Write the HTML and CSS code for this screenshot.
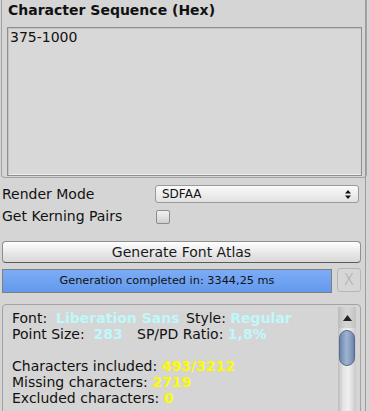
FILE: index.html
```html
<!DOCTYPE html>
<html>
<head>
<meta charset="utf-8">
<link rel="stylesheet" href="styles.css">
</head>
<body>
<div class="page">
  <div class="main">
    <div class="group">
      <div class="title">Character Sequence (Hex)</div>
      <div class="textarea">375-1000</div>
    </div>

    <div class="field">
      <div class="label">Render Mode</div>
      <div class="dropdown">
        <span>SDFAA</span>
        <svg class="updown" width="6" height="9" viewBox="0 0 6 9"><path d="M3 0 L6 3.5 L0 3.5 Z M0 5.5 L6 5.5 L3 9 Z" fill="#111"/></svg>
      </div>
    </div>

    <div class="field field-check">
      <div class="label">Get Kerning Pairs</div>
      <div class="checkbox"></div>
    </div>

    <div class="button">Generate Font Atlas</div>

    <div class="progress-row">
      <div class="progress">Generation completed in: 3344,25 ms</div>
      <div class="xbtn">X</div>
    </div>

    <div class="info">
      <div class="info-text">
        <div class="line"><span class="c1">Font:&nbsp; <b class="cy">Liberation Sans</b></span>Style: <b class="cy">Regular</b></div>
        <div class="line"><span class="c2">Point Size:&nbsp; <b class="cy">283</b></span>SP/PD Ratio: <b class="cy">1,8%</b></div>
        <div class="line"></div>
        <div class="line">Characters included: <b class="ye">493/3212</b></div>
        <div class="line">Missing characters: <b class="ye">2719</b></div>
        <div class="line">Excluded characters: <b class="ye">0</b></div>
      </div>
      <div class="scrollbar">
        <div class="sb-up"><svg width="9" height="6" viewBox="0 0 9 6"><path d="M4.5 0 L9 6 L0 6 Z" fill="#222"/></svg></div>
        <div class="sb-thumb"></div>
      </div>
    </div>
  </div>
  <div class="rail"></div>
</div>
</body>
</html>
```

FILE: styles.css
```css
html, body {
  margin: 0;
  padding: 0;
  background: #d5d5d5;
  overflow: hidden;
}

body {
  font-family: "DejaVu Sans", Verdana, sans-serif;
  font-size: 14px;
  color: #111;
}

.page {
  display: flex;
  height: 411px;
}

.main {
  width: 361px;
  flex: none;
}

.rail {
  width: 4px;
  border-right: 1px solid #9c9c9c;
  flex: none;
}

.group {
  margin-left: 1px;
  width: 355px;
  border: 1px solid #a2a2a2;
  border-top: 0;
  border-radius: 0 0 4px 4px;
  padding: 0 4px 1px 5px;
}

.title {
  font-weight: bold;
  line-height: 20px;
  height: 20px;
  padding-left: 1px;
}

.textarea {
  margin-top: 7px;
  border: 1px solid #8e8e8e;
  background: #d8d8d8;
  box-shadow: inset 1px 1px 0 #c4c4c4, inset 0 -1px 0 #eeeeee;
  padding: 1px 2px;
  line-height: 17px;
  box-sizing: border-box;
  height: 149px;
}

.field {
  display: flex;
  align-items: center;
  height: 18px;
  margin-top: 7px;
}

.field-check {
  height: 20px;
  margin-top: 3px;
}

.label {
  width: 155px;
  padding-left: 2px;
  flex: none;
  box-sizing: border-box;
}

.dropdown {
  width: 204px;
  height: 18px;
  box-sizing: border-box;
  border: 1px solid #9a9a9a;
  border-radius: 3px;
  background: linear-gradient(#fbfbfb, #e1e1e1);
  display: flex;
  align-items: center;
  justify-content: space-between;
  padding: 0 7px 0 6px;
  font-size: 12px;
}

.checkbox {
  margin-left: 1px;
  margin-top: 1px;
  width: 14px;
  height: 14px;
  box-sizing: border-box;
  border: 1px solid #8c8c8c;
  border-radius: 2px;
  background: linear-gradient(#f2f2f2, #cfcfcf);
}

.button {
  margin: 15px 0 0 2px;
  width: 359px;
  height: 22px;
  box-sizing: border-box;
  border: 1px solid #8e8e8e;
  border-bottom-color: #5a5a5a;
  border-radius: 4px;
  background: linear-gradient(#ffffff, #e6e6e6 60%, #d9d9d9);
  text-align: center;
  line-height: 20px;
  color: #1a1a1a;
}

.progress-row {
  display: flex;
  margin-top: 5px;
  align-items: flex-start;
}

.progress {
  margin: 1px 0 0 2px;
  width: 330px;
  height: 24px;
  box-sizing: border-box;
  border: 1px solid #7f7f7f;
  background: linear-gradient(#7cacf6, #6399ec);
  font-size: 11.3px;
  line-height: 22px;
  text-align: center;
  color: #111;
}

.xbtn {
  margin-left: 5px;
  width: 24px;
  height: 24px;
  box-sizing: border-box;
  border: 1px solid #b6b6b6;
  border-radius: 3px;
  background: #d6d6d6;
  color: #a8a8a8;
  font-family: "DejaVu Sans", sans-serif;
  font-weight: 200;
  font-size: 15px;
  line-height: 22px;
  text-align: center;
}

.info {
  margin: 11px 0 0 2px;
  width: 359px;
  height: 120px;
  box-sizing: border-box;
  border: 1px solid #a3a3a3;
  border-radius: 4px 4px 0 0;
  display: flex;
}

.info-text {
  flex: 1;
  padding: 5px 0 0 9px;
  white-space: nowrap;
}

.line {
  height: 16px;
  line-height: 16px;
}

.c1 {
  display: inline-block;
  width: 174px;
}

.c2 {
  display: inline-block;
  width: 125px;
}

.cy {
  color: #bff8fb;
}

.ye {
  color: #fbfb05;
}

.scrollbar {
  flex: none;
  width: 18px;
  margin: 2px 4px 0 0;
  background: linear-gradient(90deg, #bdbdbd, #e6e6e6 30%, #efefef 60%, #c9c9c9);
  display: flex;
  flex-direction: column;
  align-items: center;
}

.sb-up {
  width: 18px;
  height: 21px;
  display: flex;
  justify-content: center;
  align-items: center;
  background: linear-gradient(90deg, #bcbcbc, #d4d4d4 40%, #d4d4d4 60%, #c2c2c2);
}

.sb-up svg {
  margin-top: 1px;
}

.sb-thumb {
  margin-top: 2px;
  width: 16px;
  height: 36px;
  box-sizing: border-box;
  border: 1px solid #566b8d;
  border-radius: 8px;
  background: linear-gradient(90deg, #6d86ad, #9fb2cf 45%, #8ea3c3 70%, #6a82a8);
}
```
